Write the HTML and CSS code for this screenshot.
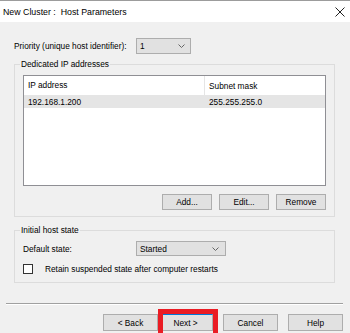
FILE: index.html
```html
<!DOCTYPE html>
<html lang="en">

<head>
    <meta charset="UTF-8">
    <meta name="viewport" content="width=device-width, initial-scale=1.0">
    <title>New Cluster : Host Parameters</title>

    <link rel="stylesheet" href="styles.css">
</head>

<body>

    <!-- Title bar -->
    <div class="titlebar">
        <span class="title">New Cluster :  Host Parameters</span>
        <svg class="close" width="10" height="10" viewBox="0 0 10 10">
            <path d="M0.5 0.5 L9.5 9.5 M9.5 0.5 L0.5 9.5" stroke="#222" stroke-width="1" fill="none" />
        </svg>
    </div>

    <div class="page">
        <!-- Priority -->
        <div class="field-row">
            <label class="field-label">Priority (unique host identifier):</label>
            <div class="combo combo-small">
                <span>1</span>
                <svg class="chevron" width="7" height="4" viewBox="0 0 7 4">
                    <path d="M0.5 0.5 L3.5 3.5 L6.5 0.5" stroke="#666" stroke-width="1" fill="none" />
                </svg>
            </div>
        </div>

        <!-- Dedicated IP addresses -->
        <fieldset class="group">
            <legend>Dedicated IP addresses</legend>
            <div class="listview">
                <div class="lv-header">
                    <div class="lv-col lv-col-ip">IP address</div>
                    <div class="lv-col">Subnet mask</div>
                </div>
                <div class="lv-row">
                    <div class="lv-col lv-col-ip">192.168.1.200</div>
                    <div class="lv-col">255.255.255.0</div>
                </div>
            </div>
            <div class="button-row">
                <button class="btn">Add...</button>
                <button class="btn">Edit...</button>
                <button class="btn">Remove</button>
            </div>
        </fieldset>

        <!-- Initial host state -->
        <fieldset class="group group-state">
            <legend>Initial host state</legend>
            <div class="field-row">
                <label class="field-label state-label">Default state:</label>
                <div class="combo combo-wide">
                    <span>Started</span>
                    <svg class="chevron" width="7" height="4" viewBox="0 0 7 4">
                        <path d="M0.5 0.5 L3.5 3.5 L6.5 0.5" stroke="#666" stroke-width="1" fill="none" />
                    </svg>
                </div>
            </div>
            <label class="check-row">
                <span class="checkbox"></span>
                Retain suspended state after computer restarts
            </label>
        </fieldset>
    </div>

    <!-- Wizard footer -->
    <div class="footer">
        <div class="separator"></div>
        <div class="wizard-buttons">
            <button class="btn btn-wide">&lt; Back</button>
            <button class="btn btn-wide btn-default">Next &gt;</button>
            <button class="btn btn-wide btn-gap">Cancel</button>
            <button class="btn btn-wide btn-gap">Help</button>
        </div>
        <div class="highlight"></div>
    </div>

</body>

</html>
```

FILE: styles.css
```css
* {
    margin: 0;
    padding: 0;
    box-sizing: border-box;
}

html, body {
    width: 350px;
    height: 333px;
    overflow: hidden;
}

body {
    position: relative;
    background-color: #f0f0f0;
    font-family: "Liberation Sans", Arial, sans-serif;
    font-size: 8.3px;
    line-height: 12px;
    color: #000;
}

/* Title bar */
.titlebar {
    height: 22px;
    background-color: #fff;
    border-top: 1px solid #9c9c9c;
    display: flex;
    align-items: center;
    justify-content: space-between;
    padding: 0 5px 0 3px;
}

.title {
    font-size: 8.8px;
    white-space: pre;
}

/* Main area */
.page {
    padding: 16px 15px 0 14px;
}

.field-row {
    display: flex;
    align-items: center;
}

.field-label {
    width: 122px;
}

.combo {
    height: 16px;
    background-color: #e1e1e1;
    border: 1px solid #adadad;
    display: flex;
    align-items: center;
    justify-content: space-between;
    padding: 0 5px 0 3px;
}

.combo-small {
    width: 55px;
}

.combo-wide {
    width: 90px;
    height: 15px;
    padding-right: 6px;
}

/* Group boxes */
.group {
    border: 1px solid #dcdcdc;
    margin-top: 4px;
    padding: 5px 8px 6px 8px;
}

.group legend {
    padding: 0 1px;
    margin-left: -3px;
    line-height: 12px;
}

.group-state {
    margin-top: 7px;
    padding: 5px 8px 7px 8px;
}

/* List view */
.listview {
    height: 111px;
    background-color: #fff;
    border: 1px solid #8f8f94;
}

.lv-header {
    height: 19px;
    display: flex;
    align-items: center;
}

.lv-header .lv-col-ip {
    border-right: 1px solid #e5e5e5;
    height: 19px;
    line-height: 19px;
}

.lv-row {
    height: 13px;
    background-color: #e5e5e5;
    display: flex;
    align-items: center;
}

.lv-col {
    padding-left: 4px;
}

.lv-col-ip {
    width: 181px;
}

/* Buttons */
.button-row {
    display: flex;
    justify-content: flex-end;
    gap: 7px;
    margin-top: 8px;
}

.btn {
    font-family: inherit;
    font-size: 8.3px;
    color: #000;
    width: 50px;
    height: 16px;
    background-color: #e1e1e1;
    border: 1px solid #adadad;
}

.state-label {
    width: 113px;
}

.check-row {
    display: flex;
    align-items: center;
    gap: 12px;
    margin-top: 7px;
}

.checkbox {
    width: 10px;
    height: 10px;
    background-color: #fff;
    border: 1px solid #333;
}

/* Footer */
.footer {
    padding: 0 7px 0 6px;
}

.separator {
    margin-top: 20px;
    border-top: 1px solid #a0a0a0;
    border-bottom: 1px solid #fff;
}

.wizard-buttons {
    display: flex;
    justify-content: flex-end;
    margin-top: 9px;
}

.btn-wide {
    width: 55px;
    height: 17px;
}

.btn-default {
    border-top-color: #0078d7;
}

.btn-gap {
    margin-left: 10px;
}

/* Red annotation box over the Next button */
.highlight {
    position: absolute;
    left: 158px;
    top: 309px;
    width: 60px;
    height: 30px;
    border: 5px solid #ea1c24;
}
```
